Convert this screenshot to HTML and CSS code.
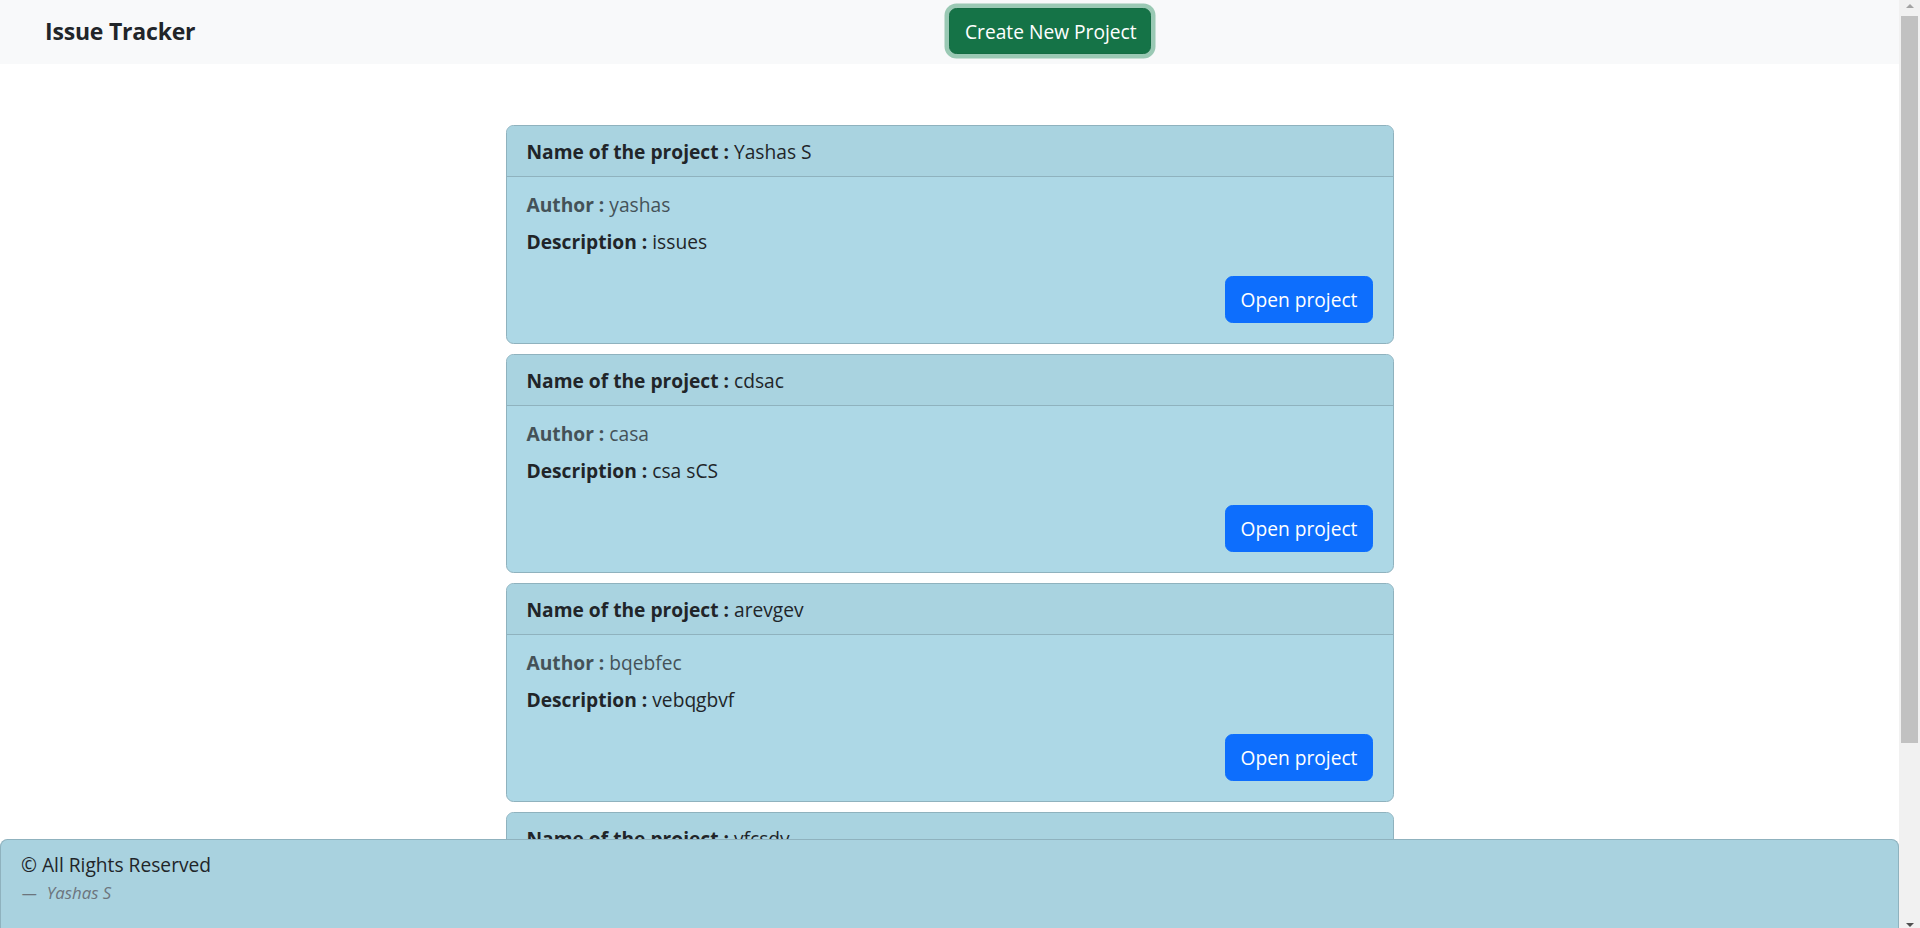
FILE: index.html
```html
<!DOCTYPE html>
<html lang="en">
<head>
<meta charset="utf-8">
<title>Issue Tracker</title>
<link rel="stylesheet" href="styles.css">
</head>
<body>
<div class="app">
  <div class="page">
    <nav class="navbar">
      <a class="brand" href="#">Issue Tracker</a>
      <div class="nav-center">
        <button class="btn btn-success" type="button">Create New Project</button>
      </div>
    </nav>

    <main class="projects">
      <div class="card">
        <div class="card-header"><b>Name of the project :</b> Yashas S</div>
        <div class="card-body">
          <h6 class="card-subtitle"><b>Author :</b> yashas</h6>
          <p class="card-text"><b>Description :</b> issues</p>
          <div class="card-actions"><a class="btn btn-primary" href="#">Open project</a></div>
        </div>
      </div>

      <div class="card">
        <div class="card-header"><b>Name of the project :</b> cdsac</div>
        <div class="card-body">
          <h6 class="card-subtitle"><b>Author :</b> casa</h6>
          <p class="card-text"><b>Description :</b> csa sCS</p>
          <div class="card-actions"><a class="btn btn-primary" href="#">Open project</a></div>
        </div>
      </div>

      <div class="card">
        <div class="card-header"><b>Name of the project :</b> arevgev</div>
        <div class="card-body">
          <h6 class="card-subtitle"><b>Author :</b> bqebfec</h6>
          <p class="card-text"><b>Description :</b> vebqgbvf</p>
          <div class="card-actions"><a class="btn btn-primary" href="#">Open project</a></div>
        </div>
      </div>

      <div class="card">
        <div class="card-header"><b>Name of the project :</b> vfcsdv</div>
        <div class="card-body">
          <h6 class="card-subtitle"><b>Author :</b> vfdsv</h6>
          <p class="card-text"><b>Description :</b> vfdsvfd</p>
          <div class="card-actions"><a class="btn btn-primary" href="#">Open project</a></div>
        </div>
      </div>
    </main>

    <footer class="site-footer">
      <p class="copy">© All Rights Reserved</p>
      <div class="quote-footer"><cite>Yashas S</cite></div>
    </footer>
  </div>

  <div class="scrollbar" aria-hidden="true">
    <div class="sb-btn sb-up"><span class="tri-up"></span></div>
    <div class="sb-thumb"></div>
    <div class="sb-btn sb-down"><span class="tri-down"></span></div>
  </div>
</div>
</body>
</html>
```

FILE: styles.css
```css
html, body {
  margin: 0;
  padding: 0;
  height: 100%;
  overflow: hidden;
}

body {
  font-family: "Open Sans", "Noto Sans", "Liberation Sans", sans-serif;
  font-size: 19.2px;
  line-height: 30px;
  color: #212529;
  background: #ffffff;
}

.app {
  display: flex;
  height: 100vh;
}

.page {
  flex: 1;
  position: relative;
  overflow: hidden;
  background: #ffffff;
}

/* Navbar */
.navbar {
  display: flex;
  align-items: center;
  box-sizing: border-box;
  height: 64px;
  padding: 0 15px 3px 45px;
  background: #f8f9fa;
}

.brand {
  width: 151px;
  margin-right: 20px;
  white-space: nowrap;
  font-size: 23px;
  font-weight: 700;
  line-height: 36px;
  padding-top: 1px;
  color: #212529;
  text-decoration: none;
  letter-spacing: -0.2px;
}

.nav-center {
  flex: 1;
  display: flex;
  justify-content: center;
}

.btn {
  display: inline-block;
  box-sizing: border-box;
  font-family: inherit;
  font-size: 19.2px;
  line-height: 30px;
  padding: 7px 15px;
  border-radius: 7.5px;
  border: 1px solid transparent;
  text-decoration: none;
  white-space: nowrap;
  cursor: pointer;
}

.btn-success {
  background: #157347;
  border-color: #146c43;
  color: #ffffff;
  width: 202px;
  height: 46px;
  padding-top: 8px;
  padding-bottom: 6px;
  box-shadow: 0 0 0 4.5px rgba(60, 153, 110, 0.5);
}

.btn-primary {
  background: #0d6efd;
  border-color: #0d6efd;
  color: #ffffff;
  width: 148px;
  height: 47px;
  padding-top: 8px;
  padding-bottom: 7px;
  text-align: center;
}

/* Project cards */
.projects {
  padding-top: 61px;
}

.card {
  width: 888px;
  margin: 0 auto 10px;
  box-sizing: border-box;
  background: #add8e6;
  border: 1px solid #8fb2be;
  border-radius: 7.5px;
  overflow: hidden;
}

.card-header {
  padding: 11px 20px 9px;
  line-height: 30px;
  background: #a9d3e0;
  border-bottom: 1px solid #8fb2be;
}

.card-body {
  padding: 21px 20px 20px;
}

.card-subtitle {
  margin: -5px 0 10px;
  font-size: 19.2px;
  line-height: 24px;
  font-weight: 500;
  color: #445258;
}

.card-text {
  margin: 0 0 19px;
  line-height: 30px;
}

.card-actions {
  display: flex;
  justify-content: flex-end;
}

b {
  font-weight: 700;
}

/* Footer (fixed over the list) */
.site-footer {
  position: absolute;
  left: 0;
  right: 0;
  bottom: 0;
  height: 89px;
  box-sizing: border-box;
  padding: 10px 20px;
  background: #a9d2df;
  border: 1px solid #8fb2be;
  border-bottom: none;
  border-radius: 7.5px 7.5px 0 0;
}

.copy {
  margin: 0;
  line-height: 30px;
  color: #212529;
}

.quote-footer {
  font-size: 16.8px;
  line-height: 26px;
  color: #6c757d;
}

.quote-footer::before {
  content: "\2014";
  display: inline-block;
  margin-right: 9px;
  transform: scaleX(0.9);
}

.quote-footer cite {
  font-style: italic;
}

/* Scrollbar drawing */
.scrollbar {
  width: 21px;
  flex: none;
  display: flex;
  flex-direction: column;
  background: #f1f1f1;
}

.sb-btn {
  height: 16px;
  display: flex;
  justify-content: center;
}

.sb-up {
  align-items: flex-start;
  padding-top: 4px;
  box-sizing: border-box;
}

.sb-down {
  margin-top: auto;
  align-items: flex-end;
  padding-bottom: 1px;
  box-sizing: border-box;
}

.tri-up {
  width: 0;
  height: 0;
  border-left: 4px solid transparent;
  border-right: 4px solid transparent;
  border-bottom: 4px solid #a3a3a3;
}

.tri-down {
  width: 0;
  height: 0;
  border-left: 4px solid transparent;
  border-right: 4px solid transparent;
  border-top: 4px solid #505050;
}

.sb-thumb {
  height: 727px;
  margin: 0 2px;
  background: #c1c1c1;
}
```
